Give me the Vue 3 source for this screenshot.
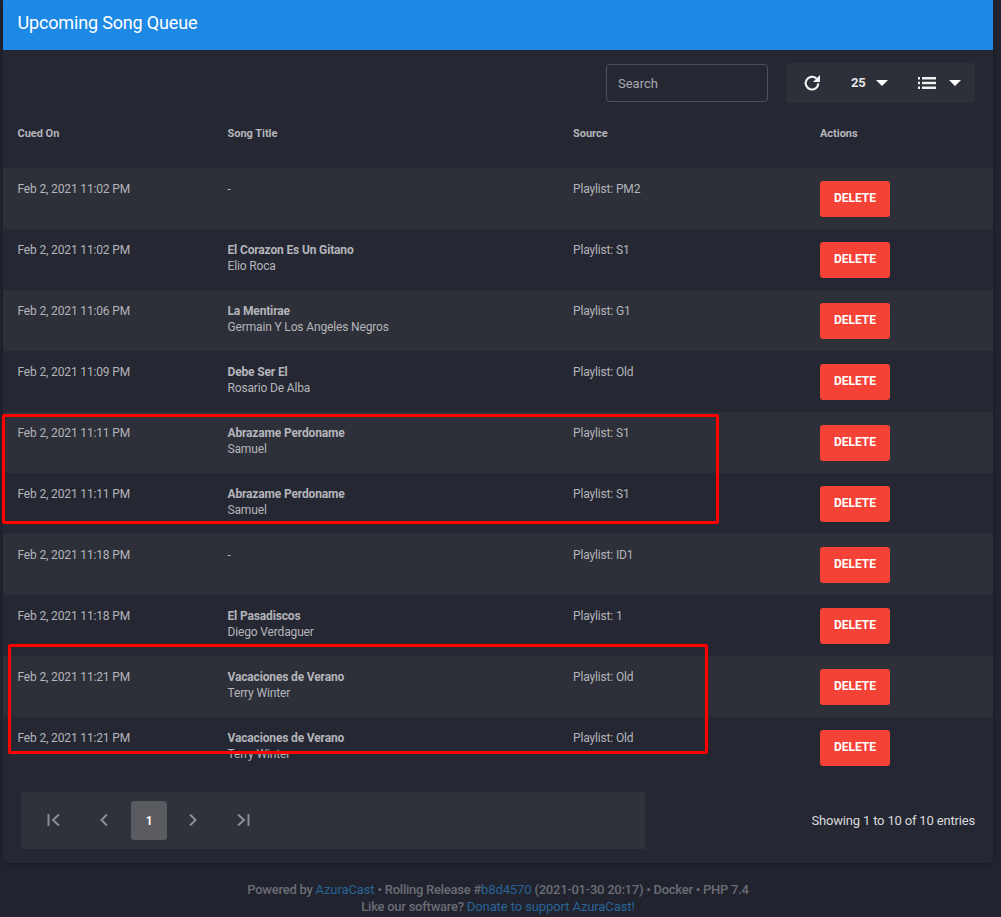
<script setup>
const rows = [
  { time: 'Feb 2, 2021 11:02 PM', title: '', artist: '', source: 'Playlist: PM2' },
  { time: 'Feb 2, 2021 11:02 PM', title: 'El Corazon Es Un Gitano', artist: 'Elio Roca', source: 'Playlist: S1' },
  { time: 'Feb 2, 2021 11:06 PM', title: 'La Mentirae', artist: 'Germain Y Los Angeles Negros', source: 'Playlist: G1' },
  { time: 'Feb 2, 2021 11:09 PM', title: 'Debe Ser El', artist: 'Rosario De Alba', source: 'Playlist: Old' },
  { time: 'Feb 2, 2021 11:11 PM', title: 'Abrazame Perdoname', artist: 'Samuel', source: 'Playlist: S1' },
  { time: 'Feb 2, 2021 11:11 PM', title: 'Abrazame Perdoname', artist: 'Samuel', source: 'Playlist: S1' },
  { time: 'Feb 2, 2021 11:18 PM', title: '', artist: '', source: 'Playlist: ID1' },
  { time: 'Feb 2, 2021 11:18 PM', title: 'El Pasadiscos', artist: 'Diego Verdaguer', source: 'Playlist: 1' },
  { time: 'Feb 2, 2021 11:21 PM', title: 'Vacaciones de Verano', artist: 'Terry Winter', source: 'Playlist: Old' },
  { time: 'Feb 2, 2021 11:21 PM', title: 'Vacaciones de Verano', artist: 'Terry Winter', source: 'Playlist: Old' },
]
</script>

<template>
  <div class="page">
    <section class="card">
      <header class="card-head"><h2>Upcoming Song Queue</h2></header>

      <div class="toolbar">
        <div class="search">Search</div>
        <div class="tools">
          <svg class="refresh" viewBox="0 0 24 24" width="20" height="20">
            <path d="M19.6 12.500a7.600 7.600 0 1 1-2.300-5.800" fill="none" stroke="#f4f4f5" stroke-width="2.600" />
            <path d="M21.500 2.500v8.300h-8.300z" fill="#f4f4f5" />
          </svg>
          <span class="count">25</span>
          <span class="caret caret-a"></span>
          <svg class="list" viewBox="0 0 18 12" width="18" height="12">
            <path d="M0 1.300h2M4 1.300h14M0 6h2M4 6h14M0 10.700h2M4 10.700h14" stroke="#f0f0f1" stroke-width="2.400" fill="none" />
          </svg>
          <span class="caret caret-b"></span>
        </div>
      </div>

      <div class="thead">
        <div class="c1">Cued On</div>
        <div class="c2">Song Title</div>
        <div class="c3">Source</div>
        <div class="c4">Actions</div>
      </div>

      <div class="tbody">
        <div v-for="(r, i) in rows" :key="i" class="row">
          <div class="c1">{{ r.time }}</div>
          <div class="c2">
            <template v-if="r.title">
              <div class="title">{{ r.title }}</div>
              <div>{{ r.artist }}</div>
            </template>
            <template v-else>-</template>
          </div>
          <div class="c3">{{ r.source }}</div>
          <div class="c4"><button class="del">DELETE</button></div>
        </div>
      </div>

      <div class="foot">
        <nav class="pager">
          <svg class="pg pg1" viewBox="0 0 14 14" width="14" height="14"><path d="M1.500 1v12M12 1.500 6 7l6 5.500" fill="none" stroke="#8c8e96" stroke-width="2" /></svg>
          <svg class="pg pg2" viewBox="0 0 14 14" width="14" height="14"><path d="M10 1.500 4.500 7l5.500 5.500" fill="none" stroke="#8c8e96" stroke-width="2" /></svg>
          <span class="cur">1</span>
          <svg class="pg pg3" viewBox="0 0 14 14" width="14" height="14"><path d="M4 1.500 9.500 7 4 12.500" fill="none" stroke="#8c8e96" stroke-width="2" /></svg>
          <svg class="pg pg4" viewBox="0 0 14 14" width="14" height="14"><path d="M12.500 1v12M2 1.500 8 7l-6 5.500" fill="none" stroke="#8c8e96" stroke-width="2" /></svg>
        </nav>
        <div class="info">Showing 1 to 10 of 10 entries</div>
      </div>
    </section>

    <footer class="site">
      <div>Powered by <a>AzuraCast</a> • Rolling Release #<a>b8d4570</a> (2021-01-30 20:17) • Docker • PHP 7.4</div>
      <div>Like our software? <a>Donate to support AzuraCast!</a></div>
    </footer>

    <div class="mark mark-a"></div>
    <div class="mark mark-b"></div>
  </div>
</template>

<style scoped>
.page {
  position: relative;
  width: 1001px;
  height: 917px;
  overflow: hidden;
  padding: 0 8px 0 3px;
  box-sizing: border-box;
  background: #21232e;
  font-family: Roboto, "Liberation Sans", sans-serif;
  font-size: 12px;
  line-height: 16px;
  letter-spacing: -0.15px;
  color: #b4b5ba;
}
.card {
  height: 863px;
  background: #252733;
  border-radius: 0 0 4px 4px;
  box-shadow: 0 1px 4px rgba(0, 0, 0, 0.25);
  display: flex;
  flex-direction: column;
}
.card-head {
  height: 50px;
  background: #1e88e5;
  display: flex;
  align-items: center;
  padding-left: 14.5px;
  padding-bottom: 5px;
  box-sizing: border-box;
}
.card-head h2 {
  margin: 0;
  font-size: 18px;
  font-weight: 400;
  line-height: 24px;
  letter-spacing: -0.16px;
  color: #fff;
}
.toolbar {
  height: 66px;
  display: flex;
  align-items: center;
  justify-content: flex-end;
  padding: 0 18px 0 0;
  box-sizing: border-box;
}
.search {
  width: 162px;
  height: 38px;
  box-sizing: border-box;
  border: 1px solid #4d4f59;
  border-radius: 4px;
  padding: 2px 11px 0;
  display: flex;
  align-items: center;
  font-size: 13px;
  letter-spacing: 0;
  color: #a9aaaf;
  margin-right: 18px;
}
.tools {
  width: 189px;
  height: 40px;
  background: #2d2f39;
  border-radius: 4px;
  display: flex;
  align-items: center;
  position: relative;
}
.refresh { margin-left: 16px; }
.count {
  margin-left: 29px;
  color: #e6e6e8;
  font-size: 13px;
  font-weight: 700;
  margin-bottom: 1px;
}
.caret {
  width: 0;
  height: 0;
  border-left: 6px solid transparent;
  border-right: 6px solid transparent;
  border-top: 6px solid #fff;
}
.caret-a { margin-left: 10px; }
.list { margin-left: 30px; }
.caret-b { margin-left: 13px; }
.thead {
  height: 52px;
  display: grid;
  grid-template-columns: 210px 346px 247px 187px;
  font-size: 11px;
  font-weight: 700;
  letter-spacing: -0.03px;
  color: #b4b5ba;
}
.thead > div { padding: 10px 14.5px 0; }
.thead > .c3, .thead > .c4 { padding-left: 14px; }
.row {
  height: 61px;
  display: grid;
  grid-template-columns: 210px 346px 247px 187px;
  box-sizing: border-box;
}
.row:nth-child(odd) { background: #2d2f39; }
.row > div { padding: 13px 14.5px 0; }
.title { font-weight: 700; }
.row > .c3 { padding-left: 14px; }
.row > .c4 { padding: 13px 14px 0; }
.del {
  display: block;
  width: 70px;
  height: 36px;
  padding: 0 0 3px;
  border: 0;
  border-radius: 3px;
  background: #f44336;
  color: #fff;
  font-family: inherit;
  font-size: 12px;
  font-weight: 700;
}
.foot {
  display: flex;
  justify-content: space-between;
  align-items: center;
  margin-top: 14px;
  padding: 0 18px;
  height: 57px;
}
.pager {
  width: 624px;
  height: 57px;
  background: #2f313b;
  display: flex;
  align-items: center;
  position: relative;
}
.pg { flex: none; margin-bottom: 1px; }
.pg1 { margin-left: 26px; }
.pg2 { margin-left: 36px; }
.cur {
  margin-left: 20px;
  width: 36px;
  height: 39px;
  border-radius: 3px;
  background: #5a5b61;
  color: #fff;
  font-weight: 700;
  display: flex;
  align-items: center;
  justify-content: center;
}
.pg3 { margin-left: 19px; }
.pg4 { margin-left: 36px; }
.info { color: #d8d9dc; font-size: 13px; letter-spacing: -0.17px; }
.site {
  margin-top: 18px;
  text-align: center;
  font-size: 13px;
  line-height: 17px;
  font-weight: 500;
  letter-spacing: -0.25px;
  color: #6b6d75;
}
.site a { color: #2a6496; font-weight: 400; letter-spacing: -0.1px; }
.mark {
  position: absolute;
  box-sizing: border-box;
  border: 3px solid #f00;
  border-radius: 2px;
}
.mark-a { left: 2px; top: 414px; width: 717px; height: 110px; }
.mark-b { left: 8px; top: 644px; width: 700px; height: 110px; }
</style>

<style>
html, body { margin: 0; background: #21232e; }
</style>
